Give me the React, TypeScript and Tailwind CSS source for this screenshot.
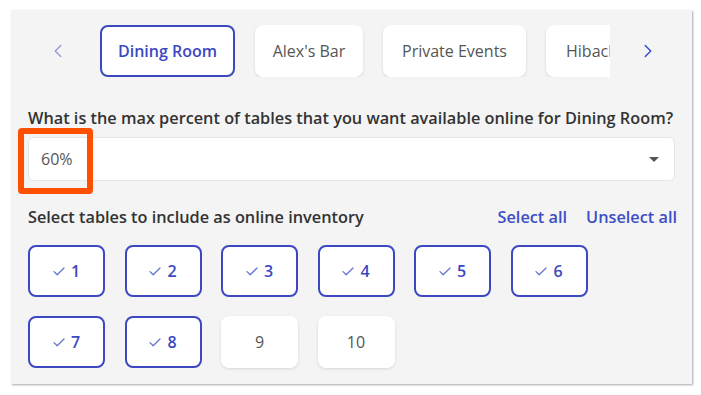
import { ChevronLeft, ChevronRight } from 'lucide-react';

const areas = ['Dining Room', "Alex's Bar", 'Private Events', 'Hibachi'];
const tabWidths = ['w-[135px]', 'w-[108px]', 'w-[143px]', 'w-[112px]'];
const tables = [1, 2, 3, 4, 5, 6, 7, 8, 9, 10];
const selected = [1, 2, 3, 4, 5, 6, 7, 8];

function Check() {
  return (
    <svg width="12" height="9" viewBox="0 0 12 9" fill="none" className="mr-[6px]">
      <path d="M1 4.6 L4.2 7.8 L11 1" stroke="#6673d0" strokeWidth="1.3" strokeLinecap="round" strokeLinejoin="round" />
    </svg>
  );
}

export default function App() {
  return (
    <div className="h-[395px] w-[701px] bg-white pl-[11px] pt-[10px] font-['Open_Sans',sans-serif]">
      <div className="h-[374px] w-[681px] bg-[#f4f4f4] px-[17px] pt-[15px] shadow-[1px_1px_2px_rgba(0,0,0,0.35)]">
        <div className="flex h-[52px] items-center">
          <button className="flex w-[60px] shrink-0 justify-center text-[#8f97d8]">
            <ChevronLeft size={22} strokeWidth={1.5} />
          </button>
          <div className="ml-[12px] flex w-[510px] shrink-0 gap-[20px] overflow-hidden">
            {areas.map((a, i) => (
              <div
                key={a}
                className={`flex h-[52px] shrink-0 items-center justify-center rounded-lg bg-white text-[16px] ${tabWidths[i]} ${
                  i === 0
                    ? 'border-2 border-[#3b48c2] font-semibold text-[#3b48c2]'
                    : 'text-[#555] shadow-[0_1px_3px_rgba(0,0,0,0.12)]'
                } ${i === 3 ? 'justify-start pl-[20px]' : ''}`}
              >
                {a}
              </div>
            ))}
          </div>
          <button className="ml-[19px] flex w-[37px] shrink-0 justify-center text-[#3d4fd0]">
            <ChevronRight size={22} strokeWidth={1.7} />
          </button>
        </div>

        <p className="mt-[31px] whitespace-nowrap text-[16.3px] leading-[20px] font-semibold text-[#333]">
          What is the max percent of tables that you want available online for Dining Room?
        </p>

        <div className="relative mt-[9px] flex h-[44px] w-[647px] items-center justify-between rounded-md border border-[#e6e6e6] bg-white pl-[12px] pr-[15px]">
          <span className="text-[16px] text-[#555]">60%</span>
          <span className="h-0 w-0 border-x-[5px] border-t-[5px] border-x-transparent border-t-[#555]" />
          <div className="pointer-events-none absolute left-[-11px] top-[-10px] h-[66px] w-[75px] rounded-[4px] border-[6px] border-[#ff4f00]" />
        </div>

        <div className="mt-[26px] flex h-[20px] items-center whitespace-nowrap text-[16.3px] font-semibold">
          <span className="text-[#333]">Select tables to include as online inventory</span>
          <span className="ml-auto text-[#3d4fc4]">Select all</span>
          <span className="ml-[19px] mr-[-2px] text-[#3d4fc4]">Unselect all</span>
        </div>

        <div className="mt-[18px] flex w-[600px] flex-wrap gap-x-[19.5px] gap-y-[19px]">
          {tables.map((t) => {
            const on = selected.includes(t);
            return (
              <div
                key={t}
                className={`flex h-[52px] w-[77px] items-center justify-center rounded-lg bg-white text-[16px] ${
                  on
                    ? 'border-2 border-[#3b48c2] font-semibold text-[#3b48c2]'
                    : 'text-[#555] shadow-[0_1px_3px_rgba(0,0,0,0.12)]'
                }`}
              >
                {on && <Check />}
                {t}
              </div>
            );
          })}
        </div>
      </div>
    </div>
  );
}
